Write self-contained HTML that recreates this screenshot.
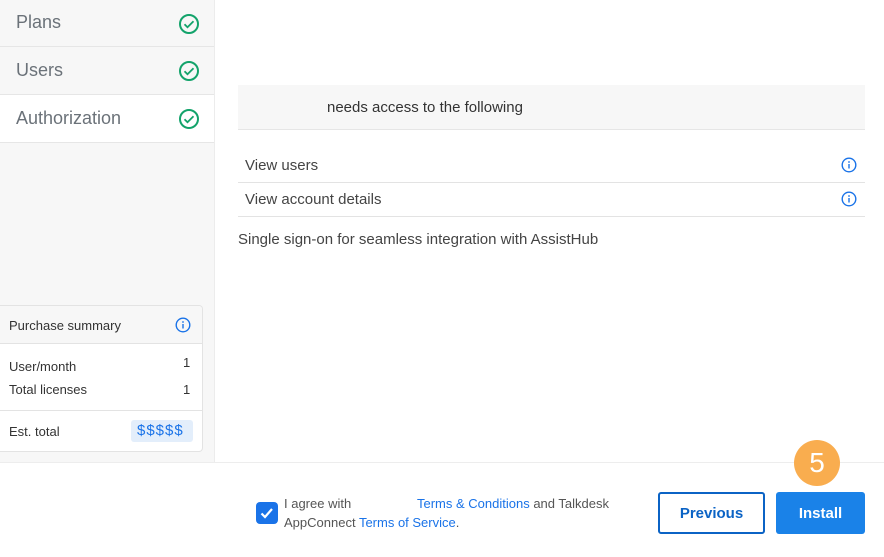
<!DOCTYPE html>
<html><head><style>
*{margin:0;padding:0;box-sizing:border-box}
body{width:884px;height:557px;overflow:hidden;background:#fff;font-family:"Liberation Sans",sans-serif;position:relative;color:#333}
.abs{position:absolute}
.side{left:0;top:0;width:215px;height:462px;background:#f7f7f7;border-right:1px solid #ececec}
.row{position:absolute;left:0;width:214px;height:48px;border-bottom:1px solid #e6e6e6;font-size:18px;color:#6b7279;padding:0 0 0 16px;line-height:47px}
.row svg{position:absolute;right:14px;top:13px}
.t{font-size:14px;color:#333;position:absolute;white-space:nowrap}
.info{position:absolute}
</style></head><body>
<div class="abs side"></div>
<div class="row" style="top:0;height:47px;line-height:45px">Plans<svg width="22" height="22" viewBox="0 0 22 22"><circle cx="11" cy="11" r="9" fill="none" stroke="#13a36b" stroke-width="2"/><path d="M6.5 11.2l3 3 6-6" fill="none" stroke="#13a36b" stroke-width="1.8"/></svg></div>
<div class="row" style="top:47px;">Users<svg width="22" height="22" viewBox="0 0 22 22"><circle cx="11" cy="11" r="9" fill="none" stroke="#13a36b" stroke-width="2"/><path d="M6.5 11.2l3 3 6-6" fill="none" stroke="#13a36b" stroke-width="1.8"/></svg></div>
<div class="row" style="top:95px;background:#fff;">Authorization<svg width="22" height="22" viewBox="0 0 22 22"><circle cx="11" cy="11" r="9" fill="none" stroke="#13a36b" stroke-width="2"/><path d="M6.5 11.2l3 3 6-6" fill="none" stroke="#13a36b" stroke-width="1.8"/></svg></div>

<div class="abs" style="left:0;top:305px;width:203px;height:147px;background:#fff;border:1px solid #e3e3e3;border-left:none;border-radius:0 4px 4px 0;overflow:hidden">
 <div style="height:38px;background:#f7f7f7;border-bottom:1px solid #e3e3e3"></div>
 <div class="t" style="left:9px;top:12px;font-size:13px">Purchase summary</div>
 <svg class="info" style="left:175px;top:11px" width="16" height="16" viewBox="0 0 16 16"><circle cx="8" cy="8" r="6.8" fill="none" stroke="#1a73e8" stroke-width="1.4"/><rect x="7.3" y="7" width="1.4" height="4.5" fill="#1a73e8"/><circle cx="8" cy="5" r="0.9" fill="#1a73e8"/></svg>
 <div class="t" style="left:9px;top:53px;font-size:13px">User/month</div>
 <div class="t" style="left:183px;top:49px;font-size:13px">1</div>
 <div class="t" style="left:9px;top:76px;font-size:13px">Total licenses</div>
 <div class="t" style="left:183px;top:76px;font-size:13px">1</div>
 <div style="position:absolute;left:0;top:104px;width:203px;border-top:1px solid #e3e3e3"></div>
 <div class="t" style="left:9px;top:118px;font-size:13px">Est. total</div>
 <div class="t" style="left:131px;top:114px;width:62px;height:22px;background:#e3eefb;border-radius:3px;color:#1a73e8;font-size:15px;padding:2px 0 0 6px;letter-spacing:1px">$$$$$</div>
</div>

<div class="abs" style="left:238px;top:85px;width:627px;height:45px;background:#f7f7f7;border-bottom:1px solid #e6e6e6"></div>
<div class="t" style="left:327px;top:99px;font-size:15px">needs access to the following</div>
<div class="t" style="left:245px;top:157px;font-size:15px;color:#444">View users</div>
<div class="abs" style="left:238px;top:182px;width:627px;border-top:1px solid #e3e3e3"></div>
<div class="t" style="left:245px;top:191px;font-size:15px;color:#444">View account details</div>
<div class="abs" style="left:238px;top:216px;width:627px;border-top:1px solid #e3e3e3"></div>
<svg class="info" style="left:841px;top:157px" width="16" height="16" viewBox="0 0 16 16"><circle cx="8" cy="8" r="6.8" fill="none" stroke="#1a73e8" stroke-width="1.4"/><rect x="7.3" y="7" width="1.4" height="4.5" fill="#1a73e8"/><circle cx="8" cy="5" r="0.9" fill="#1a73e8"/></svg>
<svg class="info" style="left:841px;top:191px" width="16" height="16" viewBox="0 0 16 16"><circle cx="8" cy="8" r="6.8" fill="none" stroke="#1a73e8" stroke-width="1.4"/><rect x="7.3" y="7" width="1.4" height="4.5" fill="#1a73e8"/><circle cx="8" cy="5" r="0.9" fill="#1a73e8"/></svg>
<div class="t" style="left:238px;top:231px;font-size:15px;color:#444">Single sign-on for seamless integration with AssistHub</div>

<div class="abs" style="left:0;top:462px;width:884px;border-top:1px solid #ededed"></div>
<div class="abs" style="left:256px;top:502px;width:22px;height:22px;background:#1a73e8;border-radius:4px"><svg width="22" height="22" viewBox="0 0 22 22"><path d="M5.5 11.5l3.5 3.5 7-8" fill="none" stroke="#fff" stroke-width="2.2"/></svg></div>
<div class="t" style="left:284px;top:496px;font-size:13px;color:#555">I agree with</div>
<div class="t" style="left:417px;top:496px;font-size:13px;color:#555"><span style="color:#1a73e8">Terms &amp; Conditions</span> and Talkdesk</div>
<div class="t" style="left:284px;top:515px;font-size:13px;color:#555">AppConnect <span style="color:#1a73e8">Terms of Service</span>.</div>
<div class="abs" style="left:658px;top:492px;width:107px;height:42px;border:2px solid #0b63c5;border-radius:3px;color:#0b63c5;font-size:15px;font-weight:bold;text-align:center;line-height:40px">Previous</div>
<div class="abs" style="left:776px;top:492px;width:89px;height:42px;background:#1a82e8;border-radius:3px;color:#fff;font-size:15px;font-weight:bold;text-align:center;line-height:43px">Install</div>
<div class="abs" style="left:794px;top:440px;width:46px;height:46px;border-radius:50%;background:#f9ad4f;color:#fff;font-size:28px;text-align:center;line-height:46px">5</div>
</body></html>
